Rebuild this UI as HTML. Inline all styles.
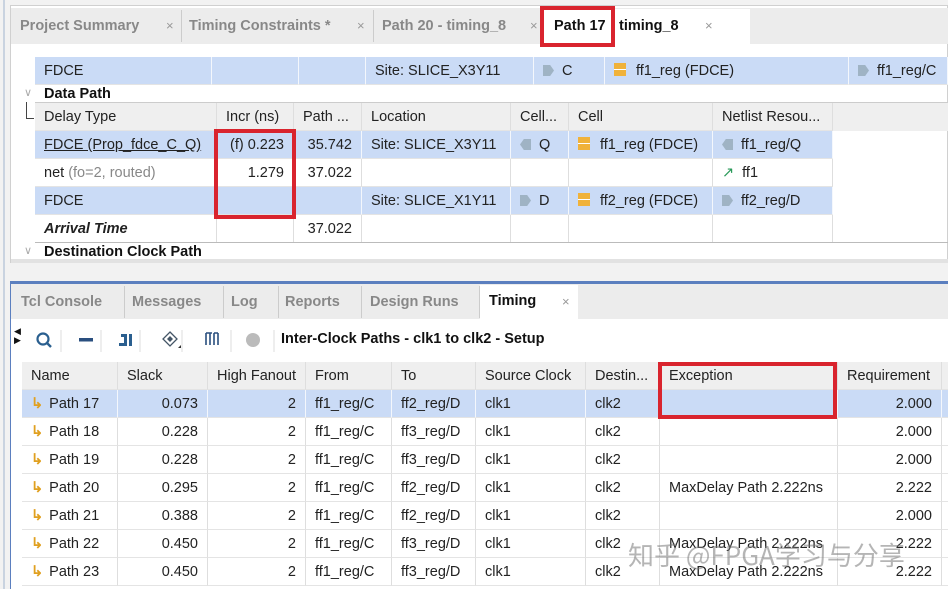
<!DOCTYPE html><html><head><meta charset="utf-8"><style>
*{margin:0;padding:0;box-sizing:border-box}
body{width:948px;height:589px;overflow:hidden;background:#f2f2f2;font-family:"Liberation Sans",Arial,sans-serif;font-size:14.5px;color:#222;position:relative}
.a{position:absolute;white-space:nowrap}
.cell{position:absolute;height:28px;line-height:28px;padding:0 9px;white-space:nowrap;overflow:hidden;border-right:1px solid #dedede;border-bottom:1px solid #e4e4e4}
.sel{background:#cadbf6;border-right-color:#f4f7fc}
.hd{background:#efefef}
.r{text-align:right}
.b{font-weight:bold}
.tab{position:absolute;height:32px;line-height:32px;font-weight:bold;color:#888;font-size:14.5px;padding-left:8px;border-right:1px solid #ccc;white-space:nowrap;overflow:hidden}
.x{position:absolute;color:#999;font-size:13px;font-weight:normal}
.red{position:absolute;border:4px solid #d9242e}
.ic{display:inline-block;width:11px;height:11px;vertical-align:-1px;margin-right:8px}
.ff{display:inline-block;width:12px;height:13px;background:linear-gradient(#f0b23a 45%,#fff 45%,#fff 55%,#f0b23a 55%);margin-right:10px;vertical-align:-1px}
</style></head><body>
<div class="a" style="left:3px;top:0;width:2px;height:589px;background:#c9d3e0"></div>
<div class="a" style="left:10px;top:5px;width:938px;height:258px;background:#fff;border:1px solid #d0d0d0"></div>
<div class="a" style="left:11px;top:8px;width:937px;height:36px;background:#ececec"></div>
<div class="tab" style="left:12px;top:10px;width:170px">Project Summary<span class="x" style="left:154px">×</span></div>
<div class="tab" style="left:181px;top:10px;width:193px">Timing Constraints *<span class="x" style="left:176px">×</span></div>
<div class="tab" style="left:374px;top:10px;width:170px">Path 20 - timing_8<span class="x" style="left:156px">×</span></div>
<div class="a" style="left:544px;top:9px;width:206px;height:35px;background:#fff"></div>
<div class="a b" style="left:554px;top:18px;color:#111">Path 17</div>
<div class="a b" style="left:619px;top:18px;color:#111">timing_8</div>
<div class="a" style="left:705px;top:18px;color:#999;font-size:13px">×</div>
<div class="red" style="left:540px;top:6px;width:75px;height:41px"></div>

<div class="cell sel" style="left:35px;top:57px;width:177px">FDCE</div>
<div class="cell sel" style="left:212px;top:57px;width:87px"></div>
<div class="cell sel" style="left:299px;top:57px;width:67px"></div>
<div class="cell sel" style="left:366px;top:57px;width:168px">Site: SLICE_X3Y11</div>
<div class="cell sel" style="left:534px;top:57px;width:71px"><span class="ic" style="background:#9fb3c4;clip-path:polygon(0 0,65% 0,100% 50%,65% 100%,0 100%)"></span>C</div>
<div class="cell sel" style="left:605px;top:57px;width:244px"><span class="ff"></span>ff1_reg (FDCE)</div>
<div class="cell sel" style="left:849px;top:57px;width:99px"><span class="ic" style="background:#9fb3c4;clip-path:polygon(0 0,65% 0,100% 50%,65% 100%,0 100%)"></span>ff1_reg/C</div>
<div class="a" style="left:24px;top:86px;color:#aaa;font-size:11px">∨</div>
<div class="a b" style="left:44px;top:86px;color:#111">Data Path</div>
<div class="a" style="left:26px;top:102px;width:8px;height:17px;border-left:1px solid #444;border-bottom:1px solid #444"></div>
<div class="a" style="left:35px;top:102px;width:913px;height:1px;background:#ccc"></div>
<div class="cell hd" style="left:35px;top:103px;width:182px">Delay Type</div>
<div class="cell hd" style="left:217px;top:103px;width:77px">Incr (ns)</div>
<div class="cell hd" style="left:294px;top:103px;width:68px">Path ...</div>
<div class="cell hd" style="left:362px;top:103px;width:149px">Location</div>
<div class="cell hd" style="left:511px;top:103px;width:58px">Cell...</div>
<div class="cell hd" style="left:569px;top:103px;width:144px">Cell</div>
<div class="cell hd" style="left:713px;top:103px;width:120px">Netlist Resou...</div>
<div class="a hd" style="left:833px;top:103px;width:115px;height:28px"></div>
<div class="cell sel" style="left:35px;top:131px;width:182px;text-decoration:underline">FDCE (Prop_fdce_C_Q)</div>
<div class="cell sel r" style="left:217px;top:131px;width:77px">(f) 0.223</div>
<div class="cell sel r" style="left:294px;top:131px;width:68px">35.742</div>
<div class="cell sel" style="left:362px;top:131px;width:149px">Site: SLICE_X3Y11</div>
<div class="cell sel" style="left:511px;top:131px;width:58px"><span class="ic" style="background:#9fb3c4;clip-path:polygon(35% 0,100% 0,100% 100%,35% 100%,0 50%)"></span>Q</div>
<div class="cell sel" style="left:569px;top:131px;width:144px"><span class="ff"></span>ff1_reg (FDCE)</div>
<div class="cell sel" style="left:713px;top:131px;width:120px"><span class="ic" style="background:#9fb3c4;clip-path:polygon(35% 0,100% 0,100% 100%,35% 100%,0 50%)"></span>ff1_reg/Q</div>

<div class="cell" style="left:35px;top:159px;width:182px">net <span style="color:#888">(fo=2, routed)</span></div>
<div class="cell r" style="left:217px;top:159px;width:77px">1.279</div>
<div class="cell r" style="left:294px;top:159px;width:68px">37.022</div>
<div class="cell" style="left:362px;top:159px;width:149px"></div>
<div class="cell" style="left:511px;top:159px;width:58px"></div>
<div class="cell" style="left:569px;top:159px;width:144px"></div>
<div class="cell" style="left:713px;top:159px;width:120px"><span style="color:#2a9a5a;margin-right:8px">↗</span>ff1</div>

<div class="cell sel" style="left:35px;top:187px;width:182px">FDCE</div>
<div class="cell sel" style="left:217px;top:187px;width:77px"></div>
<div class="cell sel" style="left:294px;top:187px;width:68px"></div>
<div class="cell sel" style="left:362px;top:187px;width:149px">Site: SLICE_X1Y11</div>
<div class="cell sel" style="left:511px;top:187px;width:58px"><span class="ic" style="background:#9fb3c4;clip-path:polygon(0 0,65% 0,100% 50%,65% 100%,0 100%)"></span>D</div>
<div class="cell sel" style="left:569px;top:187px;width:144px"><span class="ff"></span>ff2_reg (FDCE)</div>
<div class="cell sel" style="left:713px;top:187px;width:120px"><span class="ic" style="background:#9fb3c4;clip-path:polygon(0 0,65% 0,100% 50%,65% 100%,0 100%)"></span>ff2_reg/D</div>

<div class="cell" style="left:35px;top:215px;width:182px;font-weight:bold;font-style:italic">Arrival Time</div>
<div class="cell" style="left:217px;top:215px;width:77px"></div>
<div class="cell r" style="left:294px;top:215px;width:68px">37.022</div>
<div class="cell" style="left:362px;top:215px;width:149px"></div>
<div class="cell" style="left:511px;top:215px;width:58px"></div>
<div class="cell" style="left:569px;top:215px;width:144px"></div>
<div class="cell" style="left:713px;top:215px;width:120px"></div>
<div class="a" style="left:35px;top:242px;width:913px;height:1px;background:#bbb"></div>
<div class="a" style="left:24px;top:244px;color:#aaa;font-size:11px">∨</div>
<div class="a b" style="left:44px;top:244px;color:#111">Destination Clock Path</div>
<div class="a" style="left:11px;top:259px;width:937px;height:4px;background:#e2e2e2"></div>
<div class="red" style="left:214px;top:129px;width:82px;height:90px"></div>

<div class="a" style="left:10px;top:281px;width:938px;height:308px;background:#fff;border-left:1px solid #5b7fbf"></div>
<div class="a" style="left:10px;top:281px;width:938px;height:3px;background:#5b7fbf"></div>
<div class="a" style="left:11px;top:284px;width:937px;height:35px;background:#ececec"></div>
<div class="tab" style="left:12px;top:286px;width:113px;padding-left:9px">Tcl Console</div>
<div class="tab" style="left:125px;top:286px;width:99px;padding-left:7px">Messages</div>
<div class="tab" style="left:224px;top:286px;width:55px;padding-left:7px">Log</div>
<div class="tab" style="left:279px;top:286px;width:83px;padding-left:6px">Reports</div>
<div class="tab" style="left:362px;top:286px;width:118px;padding-left:8px">Design Runs</div>
<div class="a" style="left:480px;top:285px;width:98px;height:35px;background:#fff"></div>
<div class="a b" style="left:489px;top:293px;color:#111">Timing</div>
<div class="a" style="left:562px;top:294px;color:#999;font-size:13px">×</div>
<div class="a" style="left:14px;top:327px;font-size:9px;line-height:9px;color:#111">◀<br>▶</div>
<svg class="a" style="left:30px;top:328px" width="250" height="26" viewBox="0 0 250 26">
<circle cx="13" cy="11" r="5.5" fill="none" stroke="#2a5f8f" stroke-width="2.2"/><line x1="17" y1="15" x2="21" y2="19" stroke="#2a5f8f" stroke-width="2.4"/>
<line x1="31" y1="2" x2="31" y2="24" stroke="#ddd"/>
<rect x="49" y="10" width="14" height="3.5" fill="#2a4f7f"/>
<line x1="71" y1="2" x2="71" y2="24" stroke="#ddd"/>
<path d="M91 6h6v12h-8v-3h5v-6h-3zM99 6h3v12h-3z" fill="#2a5f8f"/>
<line x1="110" y1="2" x2="110" y2="24" stroke="#ddd"/>
<path d="M140 4l7 7-7 7-7-7z" fill="none" stroke="#456" stroke-width="1.3"/><path d="M140 8l3 3-3 3-3-3z" fill="#456"/><path d="M148 20h3v-3z" fill="#333"/>
<line x1="152" y1="2" x2="152" y2="24" stroke="#ddd"/>
<path d="M176 5v12M180 5v12M184 5v12M188 5v12M176 5h6M184 5h4" stroke="#2a4f7f" stroke-width="1.6" fill="none"/>
<line x1="201" y1="2" x2="201" y2="24" stroke="#ddd"/>
<circle cx="223" cy="12" r="7" fill="#bbb"/>
<line x1="244" y1="2" x2="244" y2="24" stroke="#ddd"/>
</svg>
<div class="a b" style="left:281px;top:331px;color:#111">Inter-Clock Paths - clk1 to clk2 - Setup</div>
<div class="a" style="left:22px;top:362px;width:926px;height:227px;background:#fff"></div>
<div class="cell hd" style="left:22px;top:362px;width:96px">Name</div>
<div class="cell hd" style="left:118px;top:362px;width:90px">Slack</div>
<div class="cell hd" style="left:208px;top:362px;width:98px">High Fanout</div>
<div class="cell hd" style="left:306px;top:362px;width:86px">From</div>
<div class="cell hd" style="left:392px;top:362px;width:84px">To</div>
<div class="cell hd" style="left:476px;top:362px;width:110px">Source Clock</div>
<div class="cell hd" style="left:586px;top:362px;width:74px">Destin...</div>
<div class="cell hd" style="left:660px;top:362px;width:178px">Exception</div>
<div class="cell hd" style="left:838px;top:362px;width:104px">Requirement</div>
<div class="cell hd" style="left:942px;top:362px;width:6px"></div>
<div id="rows"></div>
<div class="red" style="left:658px;top:362px;width:179px;height:57px"></div>
<div class="a" style="left:628px;top:536px;font-family:'Noto Sans CJK SC',sans-serif;font-size:26px;color:rgba(120,120,120,0.55)">知乎 @FPGA学习与分享</div>
<script>
var d=[["Path 17","0.073","ff2_reg/D","","2.000"],["Path 18","0.228","ff3_reg/D","","2.000"],["Path 19","0.228","ff3_reg/D","","2.000"],["Path 20","0.295","ff2_reg/D","MaxDelay Path 2.222ns","2.222"],["Path 21","0.388","ff2_reg/D","","2.000"],["Path 22","0.450","ff3_reg/D","MaxDelay Path 2.222ns","2.222"],["Path 23","0.450","ff3_reg/D","MaxDelay Path 2.222ns","2.222"]];
var h="";d.forEach(function(r,i){var t=390+i*28,s=i==0?" sel":"";
function c(l,w,txt,cl){h+='<div class="cell'+s+(cl||"")+'" style="left:'+l+'px;top:'+t+'px;width:'+w+'px">'+txt+'</div>';}
c(22,96,'<span style="color:#e0a020;margin:0 6px 0 0;font-weight:bold">↳</span>'+r[0]);c(118,90,r[1]," r");c(208,98,"2"," r");c(306,86,"ff1_reg/C");c(392,84,r[2]);c(476,110,"clk1");c(586,74,"clk2");c(660,178,r[3]);c(838,104,r[4]," r");c(942,6,"");});
document.getElementById("rows").outerHTML=h;
</script>
</body></html>
